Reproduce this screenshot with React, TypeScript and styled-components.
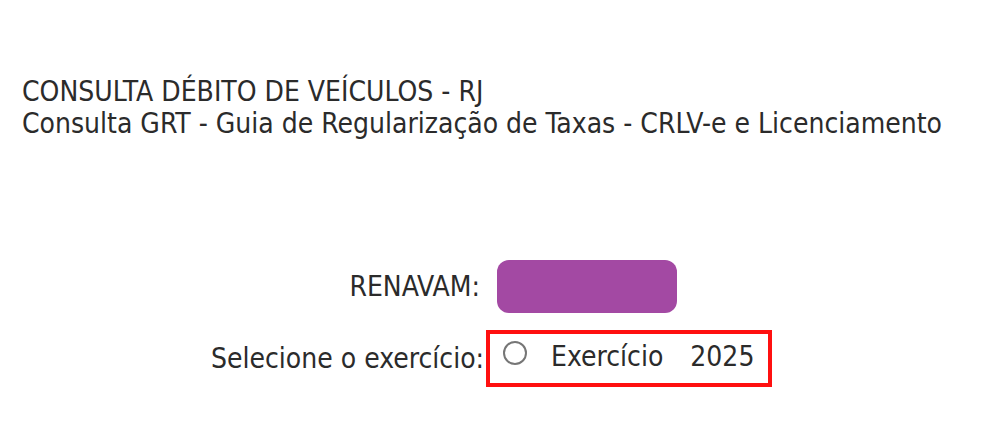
import React from 'react';
import type { FC } from 'react';
import styled, { createGlobalStyle } from 'styled-components';

const GlobalStyle = createGlobalStyle`
  html, body {
    margin: 0;
    padding: 0;
    background: #ffffff;
  }
  body {
    font-family: 'DejaVu Sans Condensed', 'DejaVu Sans', sans-serif;
    color: #2b2b2b;
  }
`;

const App: FC = () => (
  <>
    <GlobalStyle />
    <Page>
      <Header>
        <HeaderLine>CONSULTA DÉBITO DE VEÍCULOS - RJ</HeaderLine>
        <HeaderLine>Consulta GRT - Guia de Regularização de Taxas - CRLV-e e Licenciamento</HeaderLine>
      </Header>
      <Form>
        <Label>RENAVAM:</Label>
        <Field>
          <Masked />
        </Field>
        <Label>Selecione o exercício:</Label>
        <Field>
          <Highlight>
            <Radio type="radio" name="exercicio" />
            <OptionText>Exercício</OptionText>
            <OptionText>2025</OptionText>
          </Highlight>
        </Field>
      </Form>
    </Page>
  </>
);

export default App;

const Page = styled.div`
  padding: 76px 0 0 22px;
`;

const Header = styled.div`
  display: flex;
  flex-direction: column;
`;

const HeaderLine = styled.div`
  font-size: 28px;
  line-height: 32px;
  white-space: nowrap;
`;

const Form = styled.div`
  display: grid;
  grid-template-columns: 269px auto;
  column-gap: 6px;
  row-gap: 17px;
  align-items: center;
  margin: 120px 0 0 189px;
`;

const Label = styled.div`
  font-size: 28px;
  line-height: 32px;
  text-align: right;
  white-space: nowrap;
`;

const Field = styled.div`
  display: flex;
  align-items: center;
`;

const Masked = styled.div`
  width: 180px;
  height: 53px;
  margin-left: 11px;
  background: #a349a3;
  border-radius: 12px;
`;

const Highlight = styled.div`
  display: flex;
  align-items: center;
  box-sizing: border-box;
  width: 286px;
  height: 57px;
  padding: 0 0 4px 13px;
  border: 4px solid #ff1010;
`;

const Radio = styled.input`
  appearance: none;
  flex-shrink: 0;
  box-sizing: border-box;
  width: 24px;
  height: 24px;
  margin: -8px 24px 0 0;
  border: 2px solid #767676;
  border-radius: 50%;
  background: #ffffff;
`;

const OptionText = styled.span`
  font-size: 28px;
  line-height: 32px;
  margin-right: 27px;
  white-space: nowrap;
`;
